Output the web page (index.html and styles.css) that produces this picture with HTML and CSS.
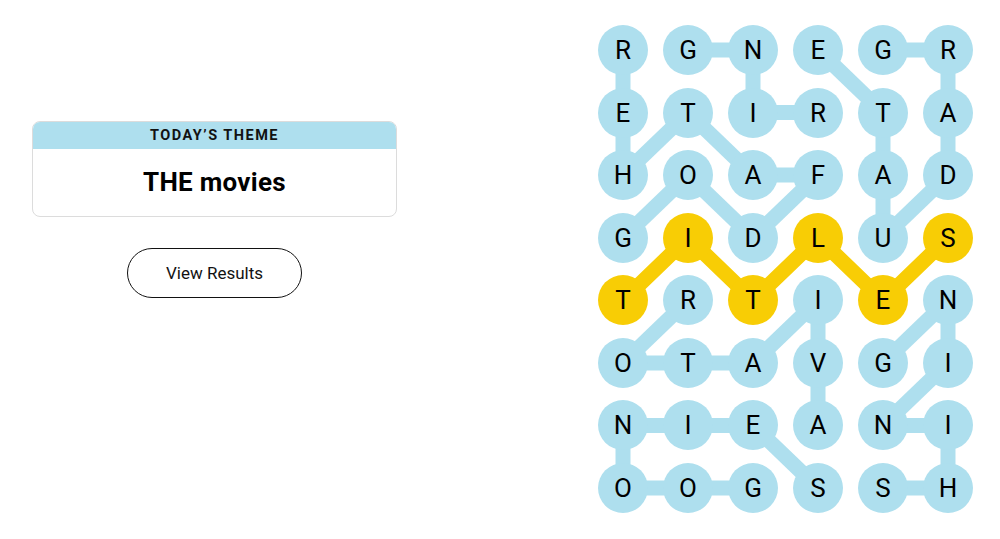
FILE: index.html
```html
<!DOCTYPE html>
<html>
<head>
<meta charset="utf-8">
<link rel="stylesheet" href="styles.css">
</head>
<body>
<main class="page">
  <section class="side">
    <div class="theme-card">
      <div class="theme-head">TODAY’S THEME</div>
      <div class="theme-body">THE movies</div>
    </div>
    <button class="results-btn">View Results</button>
  </section>
  <section class="board">
    <svg class="links" width="375" height="488" viewBox="0 0 375 488">
      <g stroke="#aedfee" stroke-width="15" fill="none">
        <!-- GODFATHER -->
        <line x1="25" y1="212.7" x2="90" y2="150.1"/>
        <line x1="90" y1="150.1" x2="155" y2="212.7"/>
        <line x1="155" y1="212.7" x2="220" y2="150.1"/>
        <line x1="220" y1="150.1" x2="155" y2="150.1"/>
        <line x1="155" y1="150.1" x2="90" y2="87.6"/>
        <line x1="90" y1="87.6" x2="25" y2="150.1"/>
        <line x1="25" y1="150.1" x2="25" y2="87.6"/>
        <line x1="25" y1="87.6" x2="25" y2="25"/>
        <!-- GRADUATE -->
        <line x1="285" y1="25" x2="350" y2="25"/>
        <line x1="350" y1="25" x2="350" y2="87.6"/>
        <line x1="350" y1="87.6" x2="350" y2="150.1"/>
        <line x1="350" y1="150.1" x2="285" y2="212.7"/>
        <line x1="285" y1="212.7" x2="285" y2="150.1"/>
        <line x1="285" y1="150.1" x2="285" y2="87.6"/>
        <line x1="285" y1="87.6" x2="220" y2="25"/>
        <!-- RING -->
        <line x1="220" y1="87.6" x2="155" y2="87.6"/>
        <line x1="155" y1="87.6" x2="155" y2="25"/>
        <line x1="155" y1="25" x2="90" y2="25"/>
        <!-- GOONIES -->
        <line x1="155" y1="463" x2="25" y2="463"/>
        <line x1="25" y1="463" x2="25" y2="400.4"/>
        <line x1="25" y1="400.4" x2="155" y2="400.4"/>
        <line x1="155" y1="400.4" x2="220" y2="463"/>
        <!-- AVIATOR -->
        <line x1="220" y1="400.4" x2="220" y2="275.3"/>
        <line x1="220" y1="275.3" x2="155" y2="337.9"/>
        <line x1="155" y1="337.9" x2="25" y2="337.9"/>
        <line x1="25" y1="337.9" x2="90" y2="275.3"/>
        <!-- SHINING -->
        <line x1="285" y1="463" x2="350" y2="463"/>
        <line x1="350" y1="463" x2="350" y2="400.4"/>
        <line x1="350" y1="400.4" x2="285" y2="400.4"/>
        <line x1="285" y1="400.4" x2="350" y2="337.9"/>
        <line x1="350" y1="337.9" x2="350" y2="275.3"/>
        <line x1="350" y1="275.3" x2="285" y2="337.9"/>
      </g>
      <g stroke="#f8cd05" stroke-width="15" fill="none">
        <polyline points="25,275.3 90,212.7 155,275.3 220,212.7 285,275.3 350,212.7"/>
      </g>
    </svg>
    <div class="grid">
      <span class="cell">R</span><span class="cell">G</span><span class="cell">N</span><span class="cell">E</span><span class="cell">G</span><span class="cell">R</span>
      <span class="cell">E</span><span class="cell">T</span><span class="cell">I</span><span class="cell">R</span><span class="cell">T</span><span class="cell">A</span>
      <span class="cell">H</span><span class="cell">O</span><span class="cell">A</span><span class="cell">F</span><span class="cell">A</span><span class="cell">D</span>
      <span class="cell">G</span><span class="cell spang">I</span><span class="cell">D</span><span class="cell spang">L</span><span class="cell">U</span><span class="cell spang">S</span>
      <span class="cell spang">T</span><span class="cell">R</span><span class="cell spang">T</span><span class="cell">I</span><span class="cell spang">E</span><span class="cell">N</span>
      <span class="cell">O</span><span class="cell">T</span><span class="cell">A</span><span class="cell">V</span><span class="cell">G</span><span class="cell">I</span>
      <span class="cell">N</span><span class="cell">I</span><span class="cell">E</span><span class="cell">A</span><span class="cell">N</span><span class="cell">I</span>
      <span class="cell">O</span><span class="cell">O</span><span class="cell">G</span><span class="cell">S</span><span class="cell">S</span><span class="cell">H</span>
    </div>
  </section>
</main>
</body>
</html>
```
FILE: styles.css
```css
* { box-sizing: border-box; }
html, body { margin: 0; padding: 0; background: #fff; }
body {
  font-family: "Roboto", "Liberation Sans", sans-serif;
  color: #000;
  width: 1000px;
  height: 539px;
  overflow: hidden;
}
.page {
  display: flex;
  align-items: flex-start;
  padding-left: 32px;
  gap: 201px;
}
.side {
  width: 365px;
  padding-top: 121px;
  display: flex;
  flex-direction: column;
  align-items: center;
}
.theme-card {
  width: 365px;
  border: 1px solid #dcdcdc;
  border-radius: 8px;
  overflow: hidden;
}
.theme-head {
  background: #aedfee;
  height: 27px;
  display: flex;
  align-items: center;
  justify-content: center;
  font-size: 14.5px;
  font-weight: 700;
  letter-spacing: 1.5px;
  color: #121212;
}
.theme-body {
  height: 67px;
  display: flex;
  align-items: center;
  justify-content: center;
  font-size: 26px;
  font-weight: 700;
  letter-spacing: 0.3px;
  padding-bottom: 2px;
}
.results-btn {
  margin-top: 31px;
  width: 175px;
  height: 50px;
  border: 1px solid #121212;
  border-radius: 25px;
  background: #fff;
  font-family: inherit;
  font-size: 17px;
  color: #121212;
  padding: 0;
}
.board {
  position: relative;
  margin-top: 25px;
  width: 375px;
  height: 488px;
}
.links {
  position: absolute;
  left: 0;
  top: 0;
}
.grid {
  position: relative;
  display: grid;
  grid-template-columns: repeat(6, 50px);
  grid-auto-rows: 50px;
  column-gap: 15px;
  row-gap: 12.57px;
}
.cell {
  width: 50px;
  height: 50px;
  border-radius: 50%;
  background: #aedfee;
  display: flex;
  align-items: center;
  justify-content: center;
  font-size: 26px;
  color: #000;
}
.cell.spang { background: #f8cd05; }
```
